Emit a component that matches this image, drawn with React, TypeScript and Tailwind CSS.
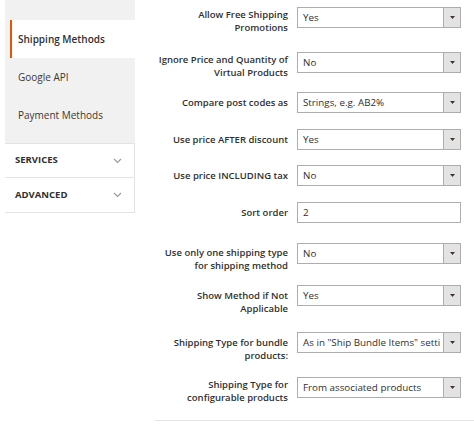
import React from 'react';

type Row = {
  label: string[];
  value: string;
  kind: 'select' | 'input';
  h: string;
  pt: string;
};

// row heights measured from the reference so the fields line up
const rows: Row[] = [
  { label: ['Allow Free Shipping', 'Promotions'], value: 'Yes', kind: 'select', h: 'h-[45px]', pt: 'pt-[1px]' },
  { label: ['Ignore Price and Quantity of', 'Virtual Products'], value: 'No', kind: 'select', h: 'h-[40px]', pt: 'pt-[1px]' },
  { label: ['Compare post codes as'], value: 'Strings, e.g. AB2%', kind: 'select', h: 'h-[37px]', pt: 'pt-[4px]' },
  { label: ['Use price AFTER discount'], value: 'Yes', kind: 'select', h: 'h-[36px]', pt: 'pt-[4px]' },
  { label: ['Use price INCLUDING tax'], value: 'No', kind: 'select', h: 'h-[37px]', pt: 'pt-[4px]' },
  { label: ['Sort order'], value: '2', kind: 'input', h: 'h-[41px]', pt: 'pt-[4px]' },
  { label: ['Use only one shipping type', 'for shipping method'], value: 'No', kind: 'select', h: 'h-[42px]', pt: 'pt-[3px]' },
  { label: ['Show Method if Not', 'Applicable'], value: 'Yes', kind: 'select', h: 'h-[47px]', pt: 'pt-[4px]' },
  { label: ['Shipping Type for bundle', 'products:'], value: 'As in "Ship Bundle Items" setti', kind: 'select', h: 'h-[45px]', pt: 'pt-[4px]' },
  { label: ['Shipping Type for', 'configurable products'], value: 'From associated products', kind: 'select', h: 'h-[43px]', pt: 'pt-[1px]' },
];

const Chevron = () => (
  <svg width="9" height="6" viewBox="0 0 9 6" className="text-[#9a9a9a]">
    <polyline points="1,1 4.5,4.5 8,1" fill="none" stroke="currentColor" strokeWidth="1.2" />
  </svg>
);

const Field = ({ row }: { row: Row }) => (
  <div className="flex h-[21px] w-[164px] border border-[#adadad] bg-white">
    <div className="flex-1 overflow-hidden whitespace-nowrap pl-[5px] text-[9.8px] leading-[19px] text-[#303030]">
      {row.value}
    </div>
    {row.kind === 'select' && (
      <div className="flex w-[17px] shrink-0 items-center justify-center border-l border-[#adadad] bg-[#e3e3e3]">
        <svg width="5" height="3" viewBox="0 0 5 3">
          <polygon points="0,0 5,0 2.5,3" fill="#41362f" />
        </svg>
      </div>
    )}
  </div>
);

export default function App() {
  return (
    <div className="flex h-[424px] w-[474px] overflow-hidden bg-white font-['Open_Sans',sans-serif] text-[#303030]">
      {/* Sidebar */}
      <div className="w-[135px] shrink-0 pl-[5px]">
        <div className="bg-[#f1f1f1] pt-[20px] pb-[9px]">
          <div className="ml-[5px] flex h-[38px] items-center border-l-2 border-[#eb5202] bg-white pl-[6px] text-[10px] font-semibold">
            Shipping Methods
          </div>
          <div className="flex h-[38px] items-center pl-[13px] text-[10px] text-[#41362f]">Google API</div>
          <div className="flex h-[38px] items-center pl-[13px] text-[10px] text-[#41362f]">Payment Methods</div>
        </div>
        <div className="flex h-[35px] items-center justify-between border-y border-r border-[#e3e3e3] pl-[10px] pr-[12px] text-[9.5px] font-bold uppercase">
          <span>Services</span>
          <Chevron />
        </div>
        <div className="flex h-[35px] items-center justify-between border-b border-r border-[#e3e3e3] pl-[10px] pr-[12px] text-[9.5px] font-bold uppercase">
          <span>Advanced</span>
          <Chevron />
        </div>
      </div>

      {/* Form */}
      <div className="flex-1 pl-[20px] pt-[7px]">
        <div className="flex flex-col">
          {rows.map((row, i) => (
            <div key={i} className={`flex items-start gap-[9px] ${row.h}`}>
              <div className={`w-[133px] text-right text-[9.5px] font-semibold leading-[13px] whitespace-nowrap ${row.pt}`}>
                {row.label.map((line, j) => (
                  <div key={j}>{line}</div>
                ))}
              </div>
              <Field row={row} />
            </div>
          ))}
        </div>
        <div className="border-t border-[#e3e3e3]" />
      </div>
    </div>
  );
}
